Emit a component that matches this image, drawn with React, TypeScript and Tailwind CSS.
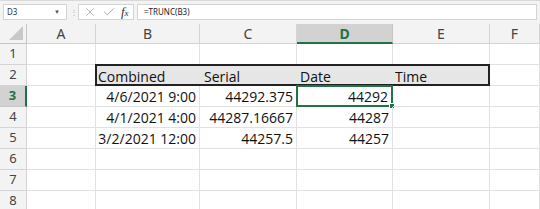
import { X, Check } from "lucide-react";

const cols = ["A", "B", "C", "D", "E", "F"];

const data: Record<number, string[]> = {
  3: ["4/6/2021 9:00", "44292.375", "44292"],
  4: ["4/1/2021 4:00", "44287.16667", "44287"],
  5: ["3/2/2021 12:00", "44257.5", "44257"],
};

const cellFont = { fontFamily: '"Open Sans", "Liberation Sans", sans-serif' };
const uiFont = { fontFamily: '"Noto Sans", "Open Sans", sans-serif' };

function RowHeader({ n }: { n: number }) {
  const active = n === 3;
  return (
    <div
      className={`flex items-center justify-center border-b border-r text-[13px] ${
        active
          ? "bg-[#d2d2d2] border-b-[#c6c6c6] border-r-2 border-r-[#217346] font-bold text-[#217346]"
          : "bg-[#f3f3f3] border-[#d4d4d4] text-[#444]"
      }`}
      style={uiFont}
    >
      {n}
    </div>
  );
}

export default function App() {
  return (
    <div className="h-[209px] w-[540px] overflow-hidden bg-white">
      {/* Formula bar */}
      <div className="flex h-[24px] items-center gap-[3px] border-t border-[#d9d9d9] bg-[#f3f3f3] px-[3px] pb-[1px]" style={uiFont}>
        <div className="flex h-[16px] w-[64px] items-center justify-between border border-[#d4d4d4] bg-white pl-[3px] pr-[6px] text-[8px] text-[#333]">
          <span>D3</span>
          <span className="text-[6px] text-[#555]">▼</span>
        </div>
        <span className="w-[5px] text-center text-[8px] text-[#aaa]">⋮</span>
        <div className="flex h-[16px] w-[56px] items-center justify-around border border-[#d4d4d4] bg-white px-[2px]">
          <X size={14} strokeWidth={1.2} className="text-[#9a9a9a]" />
          <Check size={14} strokeWidth={1.4} className="text-[#9a9a9a]" />
          <span className="text-[13px] italic text-[#333]" style={{ fontFamily: '"Liberation Serif", serif' }}>
            f<span className="text-[9px]">x</span>
          </span>
        </div>
        <div className="flex h-[16px] flex-1 items-center border border-[#d4d4d4] bg-white pl-[6px] text-[8px] text-[#222]">
          =TRUNC(B3)
        </div>
      </div>

      {/* Sheet */}
      <div
        className="grid grid-cols-[27px_69px_104px_97px_96px_97px_50px] grid-rows-[20px_repeat(8,21px)]"
        style={cellFont}
      >
        {/* corner */}
        <div className="relative border-b border-r border-[#c6c6c6] bg-[#f3f3f3]">
          <div className="absolute bottom-[3px] right-[3px] h-0 w-0 border-b-[14px] border-l-[14px] border-b-[#c8c8c8] border-l-transparent" />
        </div>
        {cols.map((c) =>
          c === "D" ? (
            <div
              key={c}
              className="flex items-center justify-center border-b-2 border-r border-b-[#217346] border-r-[#c6c6c6] bg-[#d2d2d2] text-[14px] font-bold text-[#217346]"
              style={uiFont}
            >
              {c}
            </div>
          ) : (
            <div
              key={c}
              className="flex items-center justify-center border-b border-r border-[#d4d4d4] bg-[#f3f3f3] text-[14px] text-[#444]"
              style={uiFont}
            >
              {c}
            </div>
          )
        )}

        {/* Row 1 */}
        <RowHeader n={1} />
        {cols.map((c) => (
          <div key={c} className="border-b border-r border-[#e1e1e1]" />
        ))}

        {/* Row 2 */}
        <RowHeader n={2} />
        <div className="border-b border-r border-[#e1e1e1]" />
        <div className="col-span-4 -ml-px -mt-px grid grid-cols-[104px_97px_96px_97px] items-center border-2 border-[#222] bg-[#e7e6e6] text-[14px] text-[#111]">
          <span className="pl-[1px]">Combined</span>
          <span className="pl-[3px]">Serial</span>
          <span className="pl-[2px]">Date</span>
          <span className="pl-[1px]">Time</span>
        </div>
        <div className="border-b border-r border-[#e1e1e1]" />

        {/* Rows 3-8 */}
        {[3, 4, 5, 6, 7, 8].map((r) => (
          <div key={r} className="contents">
            <RowHeader n={r} />
            {cols.map((c, i) => {
              const val = data[r]?.[i - 1];
              const selected = r === 3 && c === "D";
              return (
                <div
                  key={c}
                  className={`relative flex items-center justify-end pr-[3px] text-[14px] text-[#111] ${
                    selected ? "-ml-px -mt-px border-2 border-[#217346]" : "border-b border-r border-[#e1e1e1]"
                  }`}
                >
                  {val}
                  {selected && (
                    <div className="absolute -bottom-[4px] -right-[4px] h-[6px] w-[6px] border border-white bg-[#217346]" />
                  )}
                </div>
              );
            })}
          </div>
        ))}
      </div>
    </div>
  );
}
